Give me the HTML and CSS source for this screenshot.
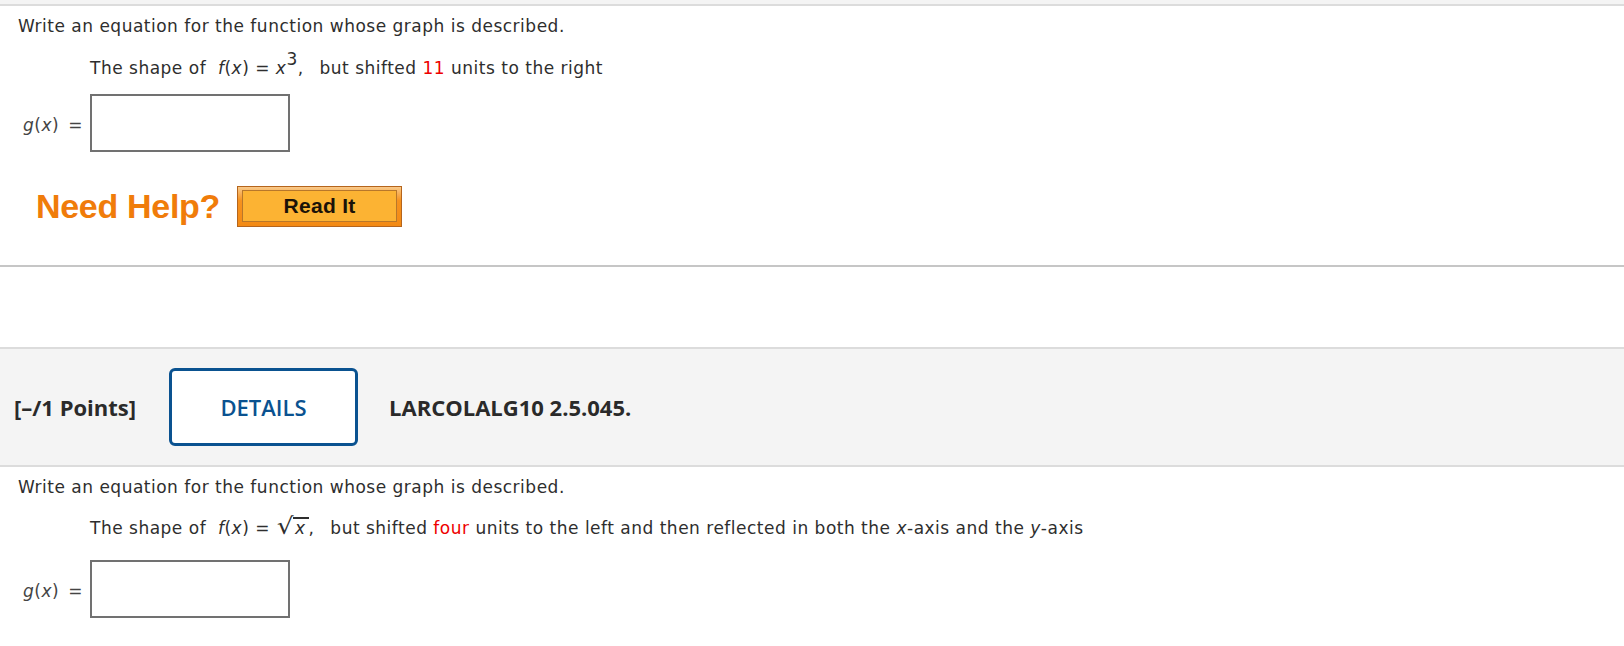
FILE: index.html
```html
<!DOCTYPE html>
<html lang="en">
<head>
<meta charset="utf-8">
<title>Question</title>
<link rel="stylesheet" href="styles.css">
</head>
<body>
<div class="top-band"></div>
<section class="question q1">
  <p class="prompt">Write an equation for the function whose graph is described.</p>
  <p class="desc">The shape of&nbsp; <i>f</i>(<i>x</i>) = <i>x</i><sup>3</sup><span class="comma">,</span> but shifted <span class="red">11</span> units to the right</p>
  <div class="answer">
    <span class="label"><i>g</i>(<i>x</i>)<span class="eq">=</span></span>
    <span class="box"></span>
  </div>
  <div class="help">
    <span class="need">Need Help?</span>
    <span class="readit"><span class="readit-inner">Read It</span></span>
  </div>
</section>
<div class="spacer"></div>
<header class="qhead">
  <span class="points">[–/1 Points]</span>
  <span class="details">DETAILS</span>
  <span class="code">LARCOLALG10 2.5.045.</span>
</header>
<section class="question q2">
  <p class="prompt">Write an equation for the function whose graph is described.</p>
  <p class="desc">The shape of&nbsp; <i>f</i>(<i>x</i>) = <span class="sqrt"><span class="rad">√</span><span class="radicand"><i>x</i></span></span><span class="comma">,</span> but shifted <span class="red">four</span> units to the left and then reflected in both the <i>x</i>-axis and the <i>y</i>-axis</p>
  <div class="answer">
    <span class="label"><i>g</i>(<i>x</i>)<span class="eq">=</span></span>
    <span class="box"></span>
  </div>
</section>
</body>
</html>
```
FILE: styles.css
```css
html, body {
  margin: 0;
  padding: 0;
  background: #ffffff;
}
body {
  font-family: "DejaVu Sans", Verdana, sans-serif;
  font-size: 17px;
  letter-spacing: 0.5px;
  color: #2e2e2e;
}
.top-band {
  height: 4px;
  background: #f4f4f4;
  border-bottom: 2px solid #dcdcdc;
}
.question {
  padding-left: 18px;
}
.q1 {
  border-bottom: 2px solid #c6c6c6;
}
.prompt {
  margin: 0;
  line-height: 20px;
}
.q1 .prompt { padding-top: 10px; }
.q2 .prompt { padding-top: 10px; }
.desc {
  margin: 0;
  line-height: 20px;
  padding-left: 72px;
}
.q1 .desc { margin-top: 22px; }
.q2 .desc { margin-top: 18px; }
.desc sup {
  font-size: 17px;
  line-height: 0;
  vertical-align: 9px;
}
.comma {
  margin-right: 10px;
}
.red { color: #ee0000; }
.sqrt {
  display: inline-flex;
  align-items: flex-end;
  margin-left: 2px;
}
.rad {
  font-size: 23px;
  line-height: 22px;
  transform: scaleX(1.15);
  margin-right: 2px;
}
.radicand {
  border-top: 2px solid #2e2e2e;
  line-height: 18px;
  padding: 0 3px 0 2px;
  margin-left: -2px;
}
.answer {
  display: flex;
  align-items: center;
  gap: 7px;
  padding-left: 5px;
}
.q1 .answer { margin-top: 16px; }
.q2 .answer { margin-top: 22px; margin-bottom: 30px; }
.label {
  color: #444;
  padding-top: 4px;
}
.eq {
  margin-left: 9px;
}
.box {
  width: 196px;
  height: 54px;
  border: 2px solid #717171;
  background: #fff;
}
.help {
  display: flex;
  align-items: center;
  gap: 17px;
  padding-left: 18px;
  margin-top: 34px;
  padding-bottom: 38px;
}
.need {
  font-family: "Liberation Sans", Arial, sans-serif;
  font-weight: bold;
  font-size: 34px;
  letter-spacing: -0.3px;
  color: #f07c0a;
}
.readit {
  display: flex;
  width: 165px;
  height: 41px;
  box-sizing: border-box;
  border: 1px solid #b5651d;
  background: linear-gradient(#f9c98a, #f6921e 35%, #f38a14);
  padding: 3px 4px 4px 4px;
}
.readit-inner {
  flex: 1;
  display: flex;
  align-items: center;
  justify-content: center;
  border: 1px solid #b8772a;
  background: #fcb333;
  font-family: "Liberation Sans", Arial, sans-serif;
  font-weight: bold;
  font-size: 21px;
  letter-spacing: 0.3px;
  color: #1b1208;
}
.spacer {
  height: 80px;
}
.qhead {
  display: flex;
  align-items: center;
  height: 116px;
  background: #f4f4f4;
  border-top: 2px solid #dcdcdc;
  border-bottom: 2px solid #dcdcdc;
  padding-left: 14px;
  font-family: "Open Sans", sans-serif;
  font-size: 22px;
  letter-spacing: 0;
  color: #2a2a2a;
}
.points {
  font-weight: 700;
}
.details {
  margin-left: 33px;
  width: 189px;
  height: 78px;
  box-sizing: border-box;
  border: 3px solid #0a5290;
  border-radius: 6px;
  background: #fff;
  display: flex;
  align-items: center;
  justify-content: center;
  color: #0a5290;
  font-weight: 600;
}
.code {
  margin-left: 31px;
  font-weight: 700;
}
```
